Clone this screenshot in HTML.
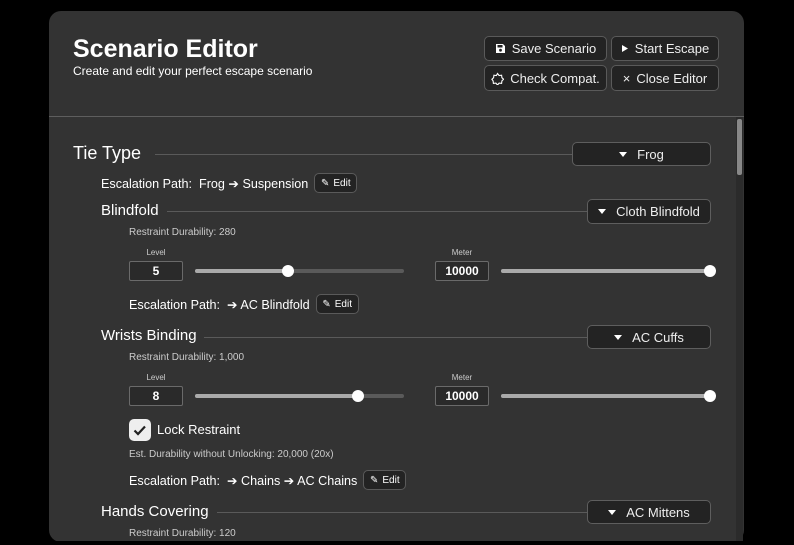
<!DOCTYPE html>
<html><head><meta charset="utf-8"><style>
*{box-sizing:border-box;margin:0;padding:0}
body{width:794px;height:545px;background:#000;font-family:"Liberation Sans",Arial,sans-serif;color:#fff;position:relative;overflow:hidden}
.panel{position:absolute;left:49px;top:11px;width:695px;height:531px;background:#333;border-radius:12px;overflow:hidden}
.a{position:absolute;white-space:nowrap}
.btn{position:absolute;background:#232323;border:1px solid #5a5a5a;border-radius:5px;font-size:13px;display:flex;align-items:center;justify-content:center;gap:6px;color:#eee}
.dd{position:absolute;background:#232323;border:1px solid #5e5e5e;border-radius:5px;font-size:13px;display:flex;align-items:center;justify-content:center;gap:10px;color:#eee}
.tri{width:0;height:0;border-left:4.5px solid transparent;border-right:4.5px solid transparent;border-top:5px solid #fff}
.line{position:absolute;height:1px;background:#5a5a5a}
.esc{position:absolute;display:flex;align-items:center;gap:6px;font-size:12.6px;white-space:nowrap}
.edit{background:#232323;border:1px solid #5a5a5a;border-radius:5px;font-size:10px;display:flex;align-items:center;justify-content:center;gap:4px;height:20px;width:43px}
.inp{position:absolute;width:54px;height:20px;border:1px solid #6a6a6a;border-radius:2px;background:#2a2a2a;font-size:12px;font-weight:bold;display:flex;align-items:center;justify-content:center}
.lbl{position:absolute;font-size:8px;color:#ccc;width:54px;text-align:center}
.tr{position:absolute;height:4px;background:#5a5a5a;border-radius:2px}
.fill{position:absolute;left:0;top:0;height:4px;background:#aaa;border-radius:2px}
.th{position:absolute;width:12px;height:12px;border-radius:50%;background:#fff;top:-4px}
.small{font-size:10px;color:#ccc}
</style></head><body>
<div class="panel"></div>
<div class="a" style="left:73px;top:35px;font-size:25px;font-weight:bold">Scenario Editor</div>
<div class="a" style="left:73px;top:64px;font-size:12px">Create and edit your perfect escape scenario</div>
<div class="btn" style="left:484px;top:36px;width:123px;height:25px"><svg width="11" height="11" viewBox="0 0 11 11"><path d="M1 1h7l2 2v7H1z" fill="#fff"/><rect x="2.5" y="2" width="5" height="2.5" fill="#232323"/><circle cx="5.5" cy="7.2" r="1.4" fill="#232323"/></svg>Save Scenario</div>
<div class="btn" style="left:611px;top:36px;width:108px;height:25px"><svg width="8" height="9" viewBox="0 0 8 9"><path d="M1 1l6 3.5L1 8z" fill="#fff"/></svg>Start Escape</div>
<div class="btn" style="left:484px;top:65px;width:123px;height:26px"><svg width="13" height="13" viewBox="0 0 13 13"><path d="M6.5 1.5l1.6 2 2.5-.3.3 2.5 1.7 1.6-1.7 1.6-.3 2.5-2.5-.3-1.6 1.9-1.6-1.9-2.5.3-.3-2.5L.9 7.3l1.7-1.6.3-2.5 2.5.3z" fill="none" stroke="#fff" stroke-width="1.1"/></svg>Check Compat.</div>
<div class="btn" style="left:611px;top:65px;width:108px;height:26px"><span style="font-size:13px">×</span> Close Editor</div>
<div class="line" style="left:49px;top:116px;width:695px;background:#5e5e5e"></div>
<div class="a" style="left:736px;top:117px;width:7px;height:425px;background:#2b2b2b"></div>
<div class="a" style="left:737px;top:119px;width:5px;height:56px;background:#888;border-radius:2px"></div>

<div class="a" style="left:73px;top:143px;font-size:18px">Tie Type</div>
<div class="line" style="left:155px;top:154px;width:417px"></div>
<div class="dd" style="left:572px;top:142px;width:139px;height:24px"><span class="tri"></span>Frog</div>
<div class="esc" style="left:101px;top:173px"><span>Escalation Path:&nbsp; Frog ➔ Suspension</span><div class="edit"><span>✎</span>Edit</div></div>

<div class="a" style="left:101px;top:202px;font-size:15px">Blindfold</div>
<div class="line" style="left:167px;top:211px;width:420px"></div>
<div class="dd" style="left:587px;top:199px;width:124px;height:25px"><span class="tri"></span>Cloth Blindfold</div>
<div class="a small" style="left:129px;top:227px">Restraint Durability: 280</div>
<div class="lbl" style="left:129px;top:248px">Level</div>
<div class="inp" style="left:129px;top:261px">5</div>
<div class="tr" style="left:195px;top:269px;width:209px"><div class="fill" style="width:93px"></div><div class="th" style="left:87px"></div></div>
<div class="lbl" style="left:435px;top:248px">Meter</div>
<div class="inp" style="left:435px;top:261px">10000</div>
<div class="tr" style="left:501px;top:269px;width:210px"><div class="fill" style="width:210px"></div><div class="th" style="left:203px"></div></div>
<div class="esc" style="left:129px;top:294px"><span>Escalation Path:&nbsp; ➔ AC Blindfold</span><div class="edit"><span>✎</span>Edit</div></div>

<div class="a" style="left:101px;top:327px;font-size:15px">Wrists Binding</div>
<div class="line" style="left:204px;top:337px;width:383px"></div>
<div class="dd" style="left:587px;top:325px;width:124px;height:24px"><span class="tri"></span>AC Cuffs</div>
<div class="a small" style="left:129px;top:352px">Restraint Durability: 1,000</div>
<div class="lbl" style="left:129px;top:373px">Level</div>
<div class="inp" style="left:129px;top:386px">8</div>
<div class="tr" style="left:195px;top:394px;width:209px"><div class="fill" style="width:163px"></div><div class="th" style="left:157px"></div></div>
<div class="lbl" style="left:435px;top:373px">Meter</div>
<div class="inp" style="left:435px;top:386px">10000</div>
<div class="tr" style="left:501px;top:394px;width:210px"><div class="fill" style="width:210px"></div><div class="th" style="left:203px"></div></div>
<div class="a" style="left:129px;top:419px;width:22px;height:22px;background:#eee;border-radius:5px"><svg width="22" height="22" viewBox="0 0 22 22"><path d="M5.5 11.5l3.5 3.5 7-7.5" fill="none" stroke="#222" stroke-width="2.2"/></svg></div>
<div class="a" style="left:157px;top:422px;font-size:13px">Lock Restraint</div>
<div class="a small" style="left:129px;top:449px">Est. Durability without Unlocking: 20,000 (20x)</div>
<div class="esc" style="left:129px;top:470px"><span>Escalation Path:&nbsp; ➔ Chains ➔ AC Chains</span><div class="edit"><span>✎</span>Edit</div></div>

<div class="a" style="left:101px;top:503px;font-size:15px">Hands Covering</div>
<div class="line" style="left:217px;top:512px;width:370px"></div>
<div class="dd" style="left:587px;top:500px;width:124px;height:24px"><span class="tri"></span>AC Mittens</div>
<div class="a small" style="left:129px;top:528px">Restraint Durability: 120</div>
<div class="a" style="left:0;top:541px;width:794px;height:4px;background:#000"></div>
</body></html>
